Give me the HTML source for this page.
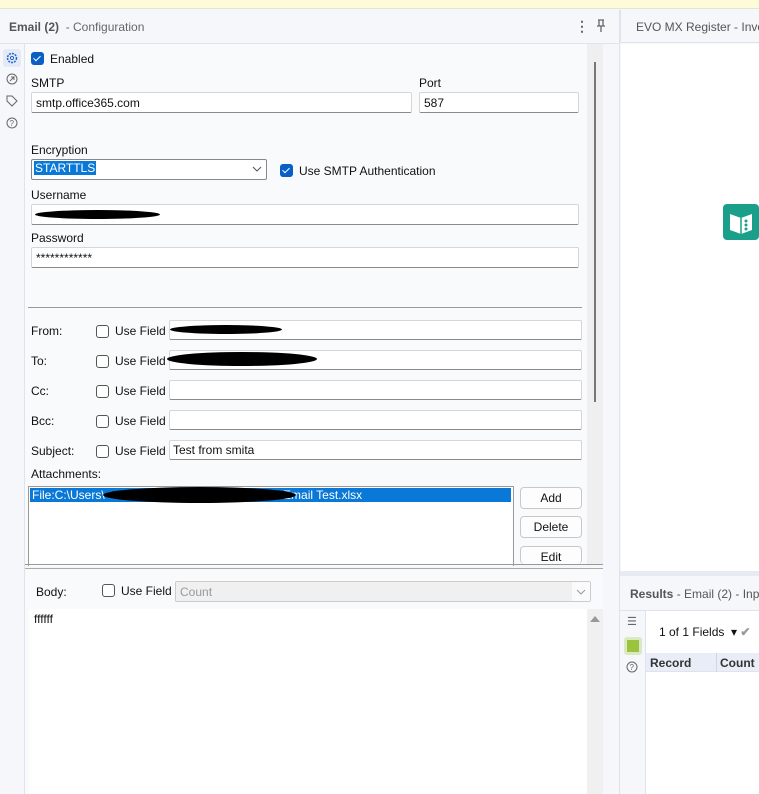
<!DOCTYPE html>
<html><head><meta charset="utf-8"><style>
*{box-sizing:border-box;margin:0;padding:0}
body{width:759px;height:794px;overflow:hidden;background:#f5f7fb;font-family:"Liberation Sans",sans-serif;font-size:12px;color:#111;position:relative}
.a{position:absolute}
.inp{position:absolute;background:#fff;border:1px solid #d6d6d6;border-bottom:1px solid #8a8a8a;border-radius:2px;height:21px;padding:3px 4px;font-size:12px}
.cb{position:absolute;width:13px;height:13px;border:1px solid #555;border-radius:3px;background:#fff}
.cbc{position:absolute;width:13px;height:13px;border-radius:3px;background:#0a5fc4}
.cbc:after{content:"";position:absolute;left:4px;top:2px;width:3px;height:6px;border:solid #fff;border-width:0 1.5px 1.5px 0;transform:rotate(45deg)}
.lbl{position:absolute;font-size:12px}
.btn{position:absolute;left:520px;width:62px;height:22px;border:1px solid #c8c8c8;border-radius:4px;background:#fdfdfd;text-align:center;line-height:20px;font-size:12px}
.blk{position:absolute;background:#000;border-radius:50%}
</style></head><body>
<div class="a" style="left:0;top:0;width:759px;height:9px;background:#fdfbd9;border-bottom:1px solid #e6e6d0"></div>
<!-- left header -->
<div class="a" style="left:0;top:10px;width:619px;height:34px;background:#f5f7fb;border-bottom:1px solid #dfe3ee"></div>
<div class="a" style="left:9px;top:20px;font-size:12px;color:#555"><b style="color:#555">Email (2)</b> &nbsp;<span style="color:#666">- Configuration</span></div>
<div class="a" style="left:575px;top:18px;color:#666;font-size:14px;font-weight:bold">⋮</div>
<svg class="a" style="left:595px;top:19px" width="12" height="14"><path d="M3 1h6M4 1v6M8 1v6M2 7h8M6 7v6" stroke="#666" stroke-width="1.3" fill="none"/></svg>
<div class="a" style="left:619px;top:10px;width:1px;height:784px;background:#dfe3ee"></div>
<!-- icon strip -->
<div class="a" style="left:24px;top:44px;width:1px;height:750px;background:#dfe3ee"></div>
<div class="a" style="left:3px;top:49px;width:18px;height:18px;background:#e3e9f6;border-radius:3px"></div>
<svg class="a" style="left:6px;top:52px" width="12" height="12"><circle cx="6" cy="6" r="4.5" stroke="#2266cc" stroke-width="1.5" fill="none" stroke-dasharray="2 1"/><circle cx="6" cy="6" r="1.6" stroke="#2266cc" fill="none"/></svg>
<svg class="a" style="left:6px;top:73px" width="12" height="12"><circle cx="6" cy="6" r="5" stroke="#666" fill="none"/><path d="M4 8l4-4M5 4h3v3" stroke="#666" fill="none"/></svg>
<svg class="a" style="left:6px;top:95px" width="12" height="12"><path d="M1 1h5l5 5-5 5-5-5z" stroke="#666" fill="none"/></svg>
<svg class="a" style="left:6px;top:117px" width="12" height="12"><circle cx="6" cy="6" r="5" stroke="#666" fill="none"/><text x="3.5" y="9" font-size="8" fill="#666" font-family="Liberation Sans">?</text></svg>
<!-- config area -->
<div class="a" style="left:25px;top:44px;width:562px;height:520px;background:#f9fafc"></div>
<div class="a" style="left:587px;top:44px;width:16px;height:520px;background:#efefef"></div>
<div class="a" style="left:594px;top:62px;width:2px;height:340px;background:#777"></div>
<div class="cbc" style="left:31px;top:52px"></div><div class="lbl" style="left:50px;top:52px">Enabled</div>
<div class="lbl" style="left:31px;top:76px">SMTP</div>
<div class="inp" style="left:31px;top:92px;width:381px">smtp.office365.com</div>
<div class="lbl" style="left:419px;top:76px">Port</div>
<div class="inp" style="left:419px;top:92px;width:160px">587</div>
<div class="lbl" style="left:31px;top:143px">Encryption</div>
<div class="inp" style="left:31px;top:159px;width:236px;border:1px solid #888;height:21px;padding:1px 2px"><span style="background:#0a78d7;color:#fff;padding:0 1px">STARTTLS</span></div>
<svg class="a" style="left:252px;top:166px" width="10" height="6"><path d="M1 1l4 4 4-4" stroke="#555" fill="none"/></svg>
<div class="cbc" style="left:280px;top:164px"></div><div class="lbl" style="left:299px;top:164px">Use SMTP Authentication</div>
<div class="lbl" style="left:31px;top:188px">Username</div>
<div class="inp" style="left:31px;top:204px;width:548px"></div>
<div class="blk" style="left:35px;top:210px;width:125px;height:9px"></div>
<div class="lbl" style="left:31px;top:231px">Password</div>
<div class="inp" style="left:31px;top:247px;width:548px">************</div>
<div class="a" style="left:28px;top:307px;width:554px;height:1px;background:#999"></div>
<div class="lbl" style="left:31px;top:324px">From:</div>
<div class="lbl" style="left:31px;top:354px">To:</div>
<div class="lbl" style="left:31px;top:384px">Cc:</div>
<div class="lbl" style="left:31px;top:414px">Bcc:</div>
<div class="lbl" style="left:31px;top:444px">Subject:</div>
<div class="cb" style="left:96px;top:325px"></div><div class="lbl" style="left:115px;top:324px">Use Field</div>
<div class="cb" style="left:96px;top:355px"></div><div class="lbl" style="left:115px;top:354px">Use Field</div>
<div class="cb" style="left:96px;top:385px"></div><div class="lbl" style="left:115px;top:384px">Use Field</div>
<div class="cb" style="left:96px;top:415px"></div><div class="lbl" style="left:115px;top:414px">Use Field</div>
<div class="cb" style="left:96px;top:445px"></div><div class="lbl" style="left:115px;top:444px">Use Field</div>
<div class="inp" style="left:169px;top:320px;width:413px;height:20px"></div>
<div class="inp" style="left:169px;top:350px;width:413px;height:20px"></div>
<div class="inp" style="left:169px;top:380px;width:413px;height:20px"></div>
<div class="inp" style="left:169px;top:410px;width:413px;height:20px"></div>
<div class="inp" style="left:169px;top:440px;width:413px;height:20px;padding:2px 3px">Test from smita</div>
<div class="blk" style="left:170px;top:325px;width:112px;height:9px"></div>
<div class="blk" style="left:167px;top:352px;width:150px;height:14px"></div>
<div class="lbl" style="left:31px;top:467px">Attachments:</div>
<div class="a" style="left:28px;top:486px;width:486px;height:80px;background:#fff;border:1px solid #999;border-bottom:none"></div>
<div class="a" style="left:30px;top:488px;width:481px;height:14px;background:#0a78d7;color:#fff;font-size:12px;padding-left:2px;line-height:14px">File:C:\Users\<span style="margin-left:175px">\Email Test.xlsx</span></div>
<div class="blk" style="left:103px;top:487px;width:193px;height:16px"></div>
<div class="btn" style="top:487px">Add</div>
<div class="btn" style="top:516px">Delete</div>
<div class="btn" style="top:546px;height:18px;border-bottom:none">Edit</div>
<div class="a" style="left:25px;top:564px;width:578px;height:1px;background:#999"></div>
<div class="a" style="left:25px;top:568px;width:578px;height:1px;background:#aaa"></div>
<!-- body -->
<div class="a" style="left:25px;top:569px;width:578px;height:225px;background:#f9fafc"></div>
<div class="lbl" style="left:36px;top:585px">Body:</div>
<div class="cb" style="left:102px;top:584px"></div><div class="lbl" style="left:121px;top:584px">Use Field</div>
<div class="a" style="left:175px;top:581px;width:416px;height:21px;background:#f0f0f0;border:1px solid #ccc;border-radius:2px;color:#999;padding:3px 4px">Count</div>
<div class="a" style="left:572px;top:582px;width:18px;height:19px;background:#fafafa"></div>
<svg class="a" style="left:576px;top:589px" width="10" height="6"><path d="M1 1l4 4 4-4" stroke="#999" fill="none"/></svg>
<div class="a" style="left:29px;top:609px;width:558px;height:185px;background:#fff"></div>
<div class="a" style="left:587px;top:609px;width:16px;height:185px;background:#f0f0f0"></div>
<svg class="a" style="left:589px;top:615px" width="12" height="8"><path d="M1 7l5-6 5 6z" fill="#999"/></svg>
<div class="lbl" style="left:34px;top:612px;color:#111">ffffff</div>
<!-- right -->
<div class="a" style="left:620px;top:10px;width:139px;height:33px;background:#f5f7fb;border-bottom:1px solid #dfe3ee;border-left:1px solid #dfe3ee"></div>
<div class="a" style="left:636px;top:20px;color:#555;white-space:nowrap">EVO MX Register - Invoice</div>
<div class="a" style="left:621px;top:44px;width:138px;height:527px;background:#fff"></div>
<div class="a" style="left:723px;top:204px;width:36px;height:36px;background:#1aa08a;border-radius:4px"></div>
<svg class="a" style="left:723px;top:204px" width="36" height="36"><path d="M7 10v16l11 4 11-4V10l-11 4z" fill="#fff"/><path d="M18 14v16" stroke="#1aa08a" stroke-width="1.5"/><circle cx="23" cy="17" r="1.5" fill="#1aa08a"/><circle cx="23" cy="21" r="1.5" fill="#1aa08a"/><circle cx="23" cy="25" r="1.5" fill="#1aa08a"/></svg>
<div class="a" style="left:620px;top:571px;width:139px;height:5px;background:#e6eaf3"></div>
<div class="a" style="left:630px;top:587px;white-space:nowrap;color:#555"><b>Results</b> - Email (2) - Input</div>
<div class="a" style="left:620px;top:610px;width:139px;height:1px;background:#dfe3ee"></div>
<div class="a" style="left:645px;top:611px;width:114px;height:183px;background:#fff;border-left:1px solid #dfe3ee"></div>
<div class="a" style="left:627px;top:615px;color:#666;font-size:11px">☰</div>
<div class="a" style="left:624px;top:637px;width:18px;height:18px;background:#dbe8c4;border-radius:3px"></div>
<div class="a" style="left:627px;top:640px;width:12px;height:12px;background:#9bc43c"></div>
<svg class="a" style="left:626px;top:661px" width="12" height="12"><circle cx="6" cy="6" r="5" stroke="#666" fill="none"/><text x="3.5" y="9" font-size="8" fill="#666" font-family="Liberation Sans">?</text></svg>
<div class="a" style="left:659px;top:625px;white-space:nowrap">1 of 1 Fields &nbsp;▾ <span style="color:#999;font-weight:bold">✔</span></div>
<div class="a" style="left:646px;top:653px;width:113px;height:19px;background:#e8edf7;border-bottom:1px solid #dfe3ee"></div>
<div class="a" style="left:650px;top:656px;font-weight:bold;font-size:12px;color:#333">Record</div>
<div class="a" style="left:716px;top:653px;width:1px;height:19px;background:#cfd6e6"></div>
<div class="a" style="left:720px;top:656px;font-weight:bold;font-size:12px;color:#333">Count</div>
</body></html>
